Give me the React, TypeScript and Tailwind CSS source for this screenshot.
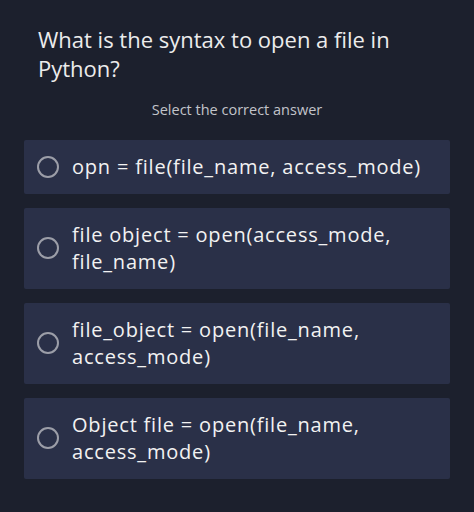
import React from 'react';

const options = [
  'opn = file(file_name, access_mode)',
  'file object = open(access_mode, file_name)',
  'file_object = open(file_name, access_mode)',
  'Object file = open(file_name, access_mode)',
];

const App: React.FC = () => {
  return (
    <div
      className="w-[474px] h-[512px] overflow-hidden bg-[#1c202d] text-white"
      style={{ fontFamily: '"Open Sans", "Noto Sans", sans-serif' }}
    >
      <div className="px-6 pt-[25px]">
        <h1 className="pl-[14px] pr-6 text-[22px] leading-[29px] text-[#ececec]">
          What is the syntax to open a file in Python?
        </h1>
        <p className="mt-[16px] text-center text-[14.5px] text-[#c2c4ca]">Select the correct answer</p>

        <div className="mt-[19px] flex flex-col gap-[14px]">
          {options.map((opt) => (
            <div key={opt} className="flex items-center bg-[#2a3048] rounded-[2px] py-[13.5px] pl-[13px] pr-4">
              <span className="shrink-0 w-[22px] h-[22px] rounded-full border-2 border-[#9c9ea8]" />
              <span className="ml-[13px] text-[20px] leading-[27px] tracking-[0.8px] text-[#f2f2f2]">{opt}</span>
            </div>
          ))}
        </div>
      </div>
    </div>
  );
};

export default App;
